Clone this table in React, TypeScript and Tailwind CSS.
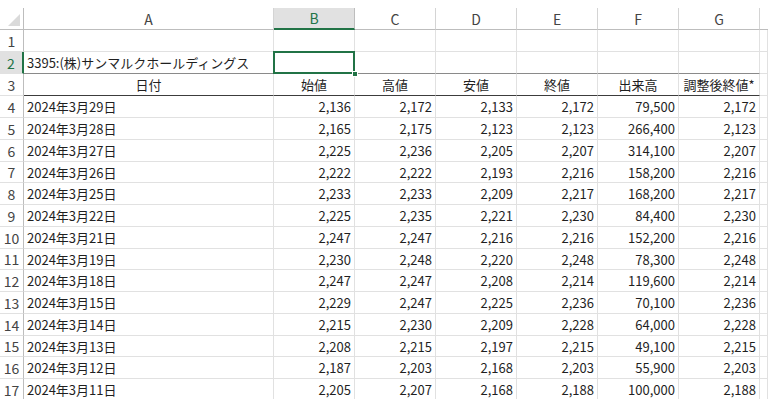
import React from 'react';

const rows: string[][] = [
  ['2024年3月29日', '2,136', '2,172', '2,133', '2,172', '79,500', '2,172'],
  ['2024年3月28日', '2,165', '2,175', '2,123', '2,123', '266,400', '2,123'],
  ['2024年3月27日', '2,225', '2,236', '2,205', '2,207', '314,100', '2,207'],
  ['2024年3月26日', '2,222', '2,222', '2,193', '2,216', '158,200', '2,216'],
  ['2024年3月25日', '2,233', '2,233', '2,209', '2,217', '168,200', '2,217'],
  ['2024年3月22日', '2,225', '2,235', '2,221', '2,230', '84,400', '2,230'],
  ['2024年3月21日', '2,247', '2,247', '2,216', '2,216', '152,200', '2,216'],
  ['2024年3月19日', '2,230', '2,248', '2,220', '2,248', '78,300', '2,248'],
  ['2024年3月18日', '2,247', '2,247', '2,208', '2,214', '119,600', '2,214'],
  ['2024年3月15日', '2,229', '2,247', '2,225', '2,236', '70,100', '2,236'],
  ['2024年3月14日', '2,215', '2,230', '2,209', '2,228', '64,000', '2,228'],
  ['2024年3月13日', '2,208', '2,215', '2,197', '2,215', '49,100', '2,215'],
  ['2024年3月12日', '2,187', '2,203', '2,168', '2,203', '55,900', '2,203'],
  ['2024年3月11日', '2,205', '2,207', '2,168', '2,188', '100,000', '2,188'],
];

const letters = ['A', 'B', 'C', 'D', 'E', 'F', 'G'];
const labels = ['日付', '始値', '高値', '安値', '終値', '出来高', '調整後終値*'];

const grid = 'grid grid-cols-[24px_250px_81px_81px_81px_81px_81px_81px_1fr]';
const cell = 'h-[22px] border-r border-b border-[#e1e1e1] flex items-center overflow-hidden whitespace-nowrap';
const rowHead = 'h-[22px] border-r border-b border-r-[#bdbdbd] border-b-[#e1e1e1] flex items-center justify-center text-[#444] text-[14px] bg-white';

// screen rows are 21.8px on average, so a few render one pixel shorter
const shortRows = [3, 7, 11];

export default function App() {
  return (
    <div
      className="w-[768px] h-[399px] overflow-hidden bg-white text-[13px] text-[#1f1f1f] leading-none"
      style={{ fontFamily: '"Noto Sans CJK JP", "Noto Sans", sans-serif' }}
    >
      <div className="h-[8px] bg-white" />
      {/* column headers */}
      <div className={`${grid} text-[14px]`}>
        <div className="h-[22px] border-r border-b border-[#bdbdbd] flex items-end justify-end p-[3px]">
          <svg width="12" height="12" viewBox="0 0 12 12">
            <polygon points="12,0 12,12 0,12" fill="#dadada" />
          </svg>
        </div>
        {letters.map((l) =>
          l === 'B' ? (
            <div
              key={l}
              className="h-[22px] border-r border-r-[#bdbdbd] border-b-2 border-b-[#217346] bg-[#e1e1e1] text-[#217346] flex items-center justify-center"
            >
              {l}
            </div>
          ) : (
            <div key={l} className="h-[22px] border-r border-b border-[#d4d4d4] border-b-[#bdbdbd] text-[#444] flex items-center justify-center">
              {l}
            </div>
          )
        )}
        <div className="h-[22px] border-b border-[#bdbdbd]" />
      </div>

      {/* row 1 */}
      <div className={grid}>
        <div className={rowHead}>1</div>
        {letters.map((l) => (
          <div key={l} className={cell} />
        ))}
        <div className={cell} />
      </div>

      {/* row 2 */}
      <div className={grid}>
        <div className="h-[22px] border-r-2 border-r-[#217346] border-b border-b-[#e1e1e1] bg-[#e1e1e1] text-[#217346] text-[14px] flex items-center justify-center">
          2
        </div>
        <div className={`${cell} border-b-[#8a8a8a] pl-[3px]`}>3395:(株)サンマルクホールディングス</div>
        <div className={`${cell} border-b-[#8a8a8a] relative overflow-visible`}>
          <div className="absolute -left-[1px] -top-[1px] -right-[1px] -bottom-[1px] border-2 border-[#217346]" />
          <div className="absolute -right-[4px] -bottom-[4px] w-[6px] h-[6px] bg-[#217346] border border-white" />
        </div>
        {letters.slice(2).map((l) => (
          <div key={l} className={`${cell} border-b-[#8a8a8a]`} />
        ))}
        <div className={cell} />
      </div>

      {/* row 3 */}
      <div className={grid}>
        <div className={rowHead}>3</div>
        {labels.map((t) => (
          <div key={t} className={`${cell} border-b-[#3c3c3c] justify-center`}>
            {t}
          </div>
        ))}
        <div className={cell} />
      </div>

      {rows.map((r, i) => {
        const h = shortRows.includes(i) ? '!h-[21px]' : '';
        return (
          <div key={i} className={grid}>
            <div className={`${rowHead} ${h}`}>{i + 4}</div>
            <div className={`${cell} ${h} pl-[3px]`}>{r[0]}</div>
            {r.slice(1).map((v, j) => (
              <div key={j} className={`${cell} ${h} justify-end pr-[3px]`}>
                {v}
              </div>
            ))}
            <div className={`${cell} ${h}`} />
          </div>
        );
      })}
    </div>
  );
}
